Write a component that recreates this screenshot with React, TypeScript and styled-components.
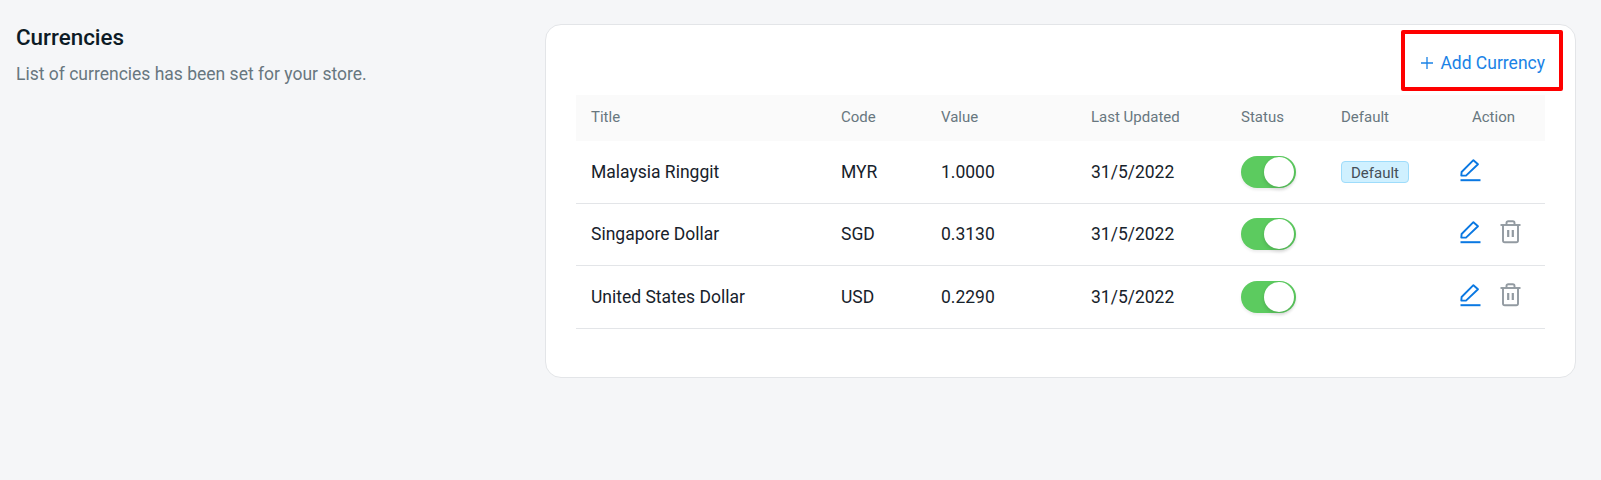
import React from "react";
import styled, { createGlobalStyle } from "styled-components";

const Global = createGlobalStyle`
  html, body { margin: 0; padding: 0; background: #f5f6f8; }
  body { font-family: Roboto, "Liberation Sans", sans-serif; }
`;

const Page = styled.main`
  display: flex;
  align-items: flex-start;
  height: 480px;
  padding: 24px 25px 0 16px;
  box-sizing: border-box;
`;

const Intro = styled.section`
  width: 529px;
  flex: none;
`;

const Heading = styled.h2`
  margin: 0;
  font-size: 22.4px;
  line-height: 26px;
  font-weight: 500;
  color: #0d1b26;
`;

const Description = styled.p`
  margin: 12px 0 0;
  font-size: 17.5px;
  line-height: 24px;
  color: #68777f;
`;

const Card = styled.section`
  position: relative;
  flex: 1;
  height: 354px;
  box-sizing: border-box;
  padding: 0 30px;
  background: #fff;
  border: 1px solid #e3e5e8;
  border-radius: 16px;
`;

const CardBar = styled.div`
  display: flex;
  justify-content: flex-end;
  height: 70px;
`;

const AddButton = styled.button`
  display: flex;
  align-items: center;
  gap: 7px;
  height: 76px;
  padding: 0;
  border: none;
  background: none;
  color: #1a82e6;
  font: 400 17.5px/24px Roboto, "Liberation Sans", sans-serif;
`;

const Highlight = styled.div`
  position: absolute;
  top: 5px;
  right: 12px;
  width: 162px;
  height: 61px;
  box-sizing: border-box;
  border: 4px solid #fe0000;
  border-radius: 2px;
`;

const columns = "250px 100px 150px 150px 100px 100px 1fr";

const HeadRow = styled.div`
  display: grid;
  grid-template-columns: ${columns};
  align-items: center;
  height: 46px;
  background: #fafafa;
`;

const HeadCell = styled.div<{ $center?: boolean }>`
  padding-left: ${(p) => (p.$center ? "16px" : "15px")};
  text-align: ${(p) => (p.$center ? "center" : "left")};
  font-size: 15px;
  line-height: 20px;
  margin-top: -2px;
  color: #68777f;
`;

const Row = styled.div`
  display: grid;
  grid-template-columns: ${columns};
  align-items: center;
  height: 62.5px;
  box-sizing: border-box;
  border-bottom: 1px solid #e3e5e8;
`;

const Cell = styled.div`
  padding-left: 15px;
  font-size: 17.5px;
  line-height: 24px;
  color: #17222b;
`;

const Toggle = styled.span`
  display: block;
  position: relative;
  width: 55px;
  height: 32px;
  border-radius: 16px;
  background: #5ccb5f;
  box-shadow: 0 2px 3px rgba(0, 0, 0, 0.08);
`;

const Knob = styled.span`
  position: absolute;
  top: 1px;
  right: 2px;
  width: 30px;
  height: 30px;
  border-radius: 50%;
  background: #fff;
  box-shadow: 0 2px 4px rgba(0, 0, 0, 0.15);
`;

const Badge = styled.span`
  display: block;
  box-sizing: border-box;
  width: 68px;
  height: 22px;
  border: 1px solid #9edcfb;
  border-radius: 4px;
  background: #cff0ff;
  color: #454f58;
  font-size: 15px;
  line-height: 22px;
  text-align: center;
`;

const Actions = styled.div`
  display: flex;
  align-items: center;
  gap: 19px;
  padding-left: 34px;
  margin-top: -4px;
`;

const IconButton = styled.span`
  display: flex;
  width: 21px;
  height: 24px;
`;

const EditIcon = () => (
  <svg width="21" height="24" viewBox="0 0 21 24" fill="none" stroke="#0a78e2">
    <path d="M1.3 17.6 1.6 14 13.4 2.2 18 6.2 6 17.6Z" strokeWidth="1.9" strokeLinejoin="round" />
    <path d="M0.5 22.2H20.5" strokeWidth="2" />
  </svg>
);

const TrashIcon = () => (
  <svg width="21" height="24" viewBox="0 0 21 24" fill="none" stroke="#929aa1" strokeWidth="1.9">
    <path d="M0.5 5H20.5" />
    <path d="M6.5 5V2.8C6.5 1.8 7.2 1.2 8.2 1.2H12.8C13.8 1.2 14.5 1.8 14.5 2.8V5" />
    <path d="M3 5V20.5C3 21.6 3.7 22.3 4.8 22.3H16.2C17.3 22.3 18 21.6 18 20.5V5" />
    <path d="M8.2 10V17M12.8 10V17" strokeWidth="2.2" />
  </svg>
);

const rows = [
  { title: "Malaysia Ringgit", code: "MYR", value: "1.0000", isDefault: true },
  { title: "Singapore Dollar", code: "SGD", value: "0.3130", isDefault: false },
  { title: "United States Dollar", code: "USD", value: "0.2290", isDefault: false },
];

export default function App() {
  return (
    <>
      <Global />
      <Page>
        <Intro>
          <Heading>Currencies</Heading>
          <Description>List of currencies has been set for your store.</Description>
        </Intro>
        <Card>
          <CardBar>
            <AddButton>
              <svg width="12" height="12" viewBox="0 0 12 12" stroke="#1a82e6" strokeWidth="1.3">
                <path d="M6 0V12M0 6H12" />
              </svg>
              Add Currency
            </AddButton>
          </CardBar>
          <Highlight />
          <HeadRow>
            <HeadCell>Title</HeadCell>
            <HeadCell>Code</HeadCell>
            <HeadCell>Value</HeadCell>
            <HeadCell>Last Updated</HeadCell>
            <HeadCell>Status</HeadCell>
            <HeadCell>Default</HeadCell>
            <HeadCell $center>Action</HeadCell>
          </HeadRow>
          {rows.map((r) => (
            <Row key={r.code}>
              <Cell>{r.title}</Cell>
              <Cell>{r.code}</Cell>
              <Cell>{r.value}</Cell>
              <Cell>31/5/2022</Cell>
              <Cell>
                <Toggle>
                  <Knob />
                </Toggle>
              </Cell>
              <Cell>{r.isDefault && <Badge>Default</Badge>}</Cell>
              <Actions>
                <IconButton>
                  <EditIcon />
                </IconButton>
                {!r.isDefault && (
                  <IconButton>
                    <TrashIcon />
                  </IconButton>
                )}
              </Actions>
            </Row>
          ))}
        </Card>
      </Page>
    </>
  );
}
